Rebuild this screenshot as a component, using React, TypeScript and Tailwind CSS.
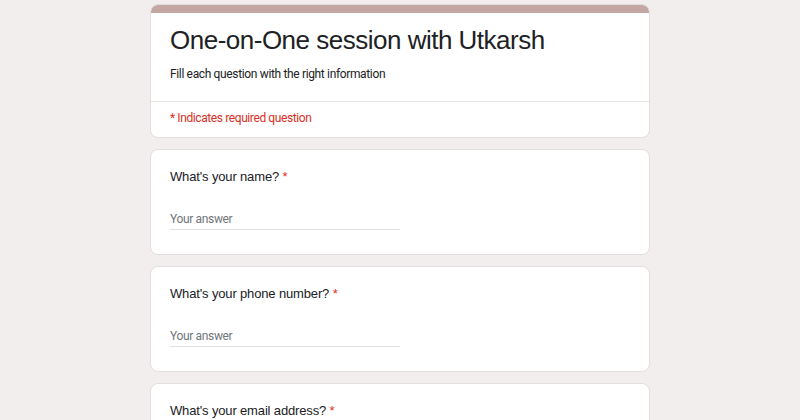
const questions = [
  "What's your name?",
  "What's your phone number?",
  "What's your email address?",
];

function QuestionCard({ label }: { label: string }) {
  return (
    <div className="rounded-lg border border-[#e3dedd] bg-white px-[19px] pt-[17px] pb-6">
      <p className="text-[13px] leading-5 tracking-[-0.15px] text-[#202124] font-['Liberation_Sans',Arial,sans-serif]">
        {label} <span className="text-[#d93025]">*</span>
      </p>
      <div className="mt-6 w-[230px] border-b border-[#e0e0e0] pb-[2px]">
        <span className="block text-[12px] leading-4 tracking-[-0.35px] text-[#70757a] font-['Roboto',sans-serif]">
          Your answer
        </span>
      </div>
    </div>
  );
}

export default function App() {
  return (
    <div className="min-h-[420px] w-full bg-[#f1eeed] pt-1">
      <div className="mx-auto flex w-[500px] flex-col gap-[11px]">
        <div className="overflow-hidden rounded-lg border border-[#e3dedd] bg-white">
          <div className="h-2 bg-[#c4a6a3]" />
          <div className="px-[19px] pt-[9px] pb-[19px] border-b border-[#e8e4e3]">
            <h1 className="text-[26px] leading-9 tracking-[-0.5px] text-[#202124] font-['Liberation_Sans',Arial,sans-serif]">
              One-on-One session with Utkarsh
            </h1>
            <p className="mt-2 text-[12px] leading-4 tracking-[-0.35px] text-[#202124] font-['Roboto',sans-serif]">
              Fill each question with the right information
            </p>
          </div>
          <div className="px-[19px] pt-2 pb-[11px]">
            <p className="text-[12px] leading-4 tracking-[-0.4px] text-[#d93025] font-['Roboto',sans-serif]">
              * Indicates required question
            </p>
          </div>
        </div>
        {questions.map((q) => (
          <QuestionCard key={q} label={q} />
        ))}
      </div>
    </div>
  );
}
